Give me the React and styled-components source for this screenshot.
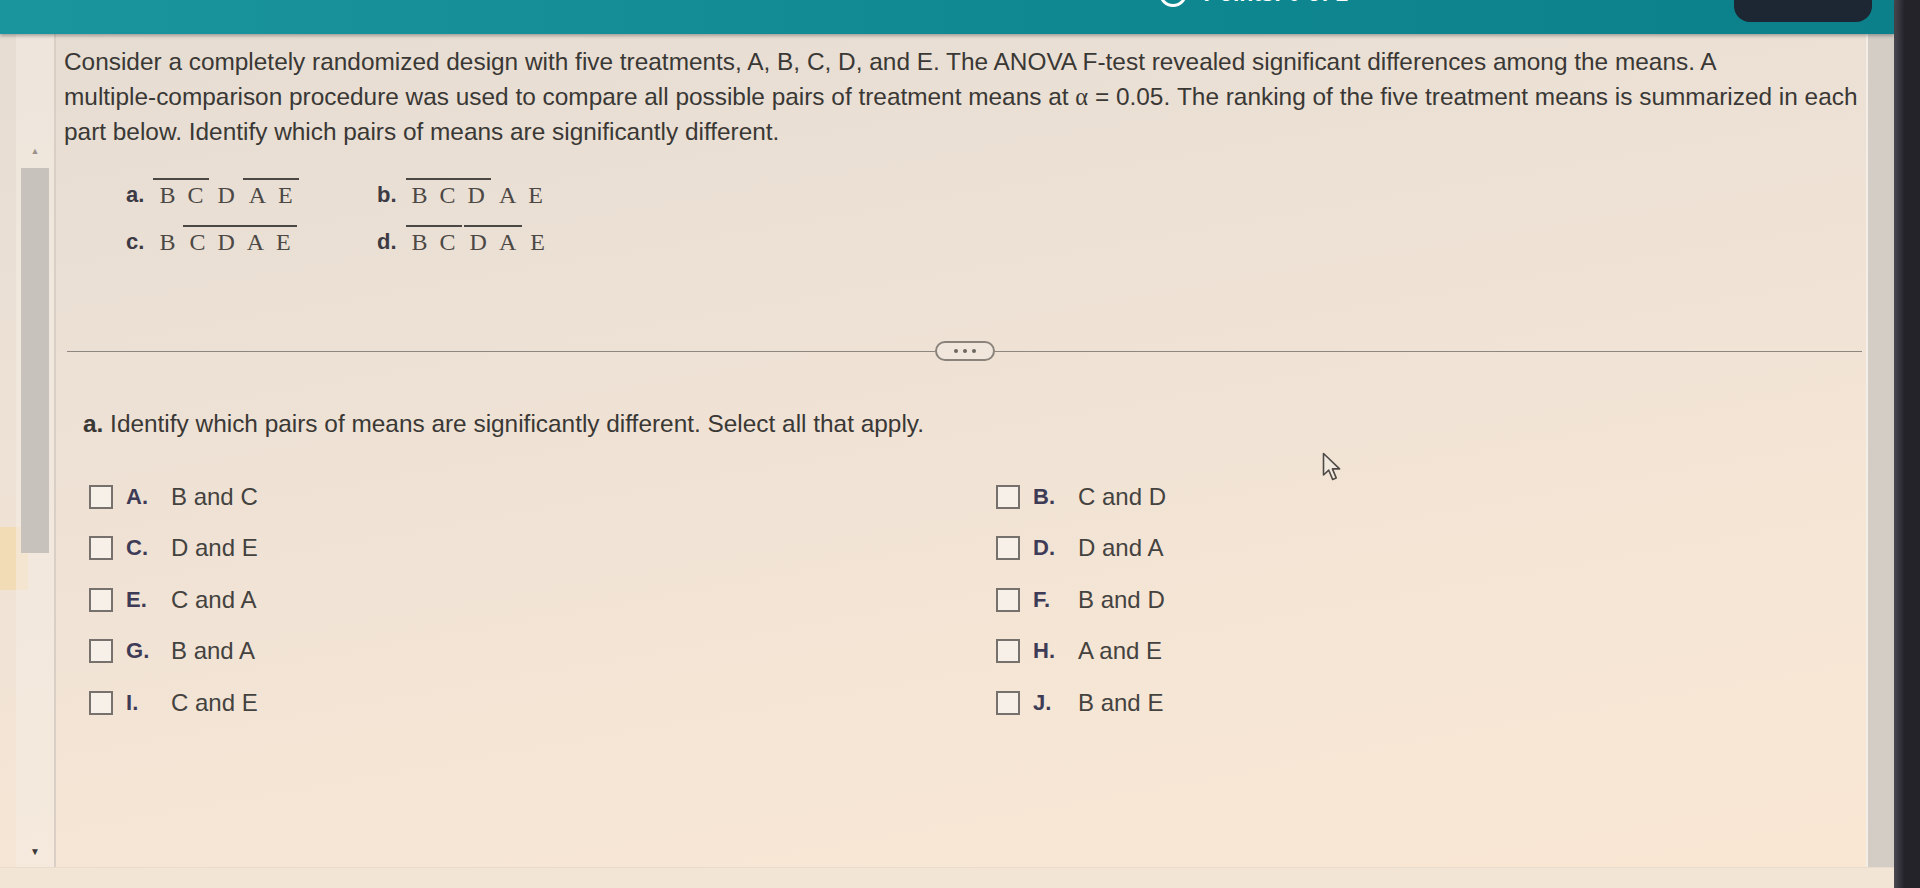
import React from 'react';
import styled, { createGlobalStyle } from 'styled-components';

const GlobalStyle = createGlobalStyle`
  html, body {
    margin: 0;
    padding: 0;
    width: 1920px;
    height: 888px;
    overflow: hidden;
  }
  body {
    font-family: "Liberation Sans", Arial, sans-serif;
    color: #3a3835;
  }
`;

const rankings = [
  { key: 'a', groups: [{ l: 'BC', over: true }, { l: 'D' }, { l: 'AE', over: true }] },
  { key: 'b', groups: [{ l: 'BCD', over: true }, { l: 'AE' }] },
  { key: 'c', groups: [{ l: 'B' }, { l: 'CDAE', over: true }] },
  { key: 'd', groups: [{ l: 'BC', over: true }, { l: 'DA', over: true }, { l: 'E' }] },
];

const options = [
  ['A', 'B and C'], ['B', 'C and D'],
  ['C', 'D and E'], ['D', 'D and A'],
  ['E', 'C and A'], ['F', 'B and D'],
  ['G', 'B and A'], ['H', 'A and E'],
  ['I', 'C and E'], ['J', 'B and E'],
];

export default function App() {
  return (
    <>
      <GlobalStyle />
      <Screen>
        <Display>
          <TopBar>
            <Points>
              <PointsIcon />
              <span>Points: 0 of 1</span>
            </Points>
            <SaveButton />
          </TopBar>
          <Body>
            <Rail>
              <Strip>
                <Patch />
              </Strip>
              <Track>
                <ArrowUp>▲</ArrowUp>
                <Thumb />
                <ArrowDown>▼</ArrowDown>
              </Track>
            </Rail>
            <Content>
              <Question>
                Consider a completely randomized design with five treatments, A, B, C, D, and E. The ANOVA F-test revealed significant differences among the means. A<br />
                multiple-comparison procedure was used to compare all possible pairs of treatment means at <Alpha>α</Alpha> = 0.05. The ranking of the five treatment means is summarized in each<br />
                part below. Identify which pairs of means are significantly different.
              </Question>

              <RankGrid>
                {rankings.map((r) => (
                  <RankCell key={r.key}>
                    <RankLabel>{r.key}.</RankLabel>
                    {r.groups.map((g, i) => (
                      <Segment key={i} $over={g.over}>
                        {g.l.split('').map((ch) => (
                          <Letter key={ch}>{ch}</Letter>
                        ))}
                      </Segment>
                    ))}
                  </RankCell>
                ))}
              </RankGrid>

              <Divider>
                <Line />
                <MoreButton>
                  <Dot /><Dot /><Dot />
                </MoreButton>
                <Line />
              </Divider>

              <Prompt>
                <b>a.</b> Identify which pairs of means are significantly different. Select all that apply.
              </Prompt>

              <OptionGrid>
                {options.map(([key, text]) => (
                  <Option key={key}>
                    <Box />
                    <OptionKey>{key}.</OptionKey>
                    <OptionText>{text}</OptionText>
                  </Option>
                ))}
              </OptionGrid>
            </Content>
            <Gutter />
          </Body>
          <FooterBand />
          <Cursor viewBox="0 0 20 30" width="20" height="30">
            <path d="M1.5 1.5 L1.5 23 L6.8 18.2 L10.6 27.4 L14.2 25.9 L10.4 16.9 L17.6 16.9 Z"
              fill="#f1e8de" stroke="#4d4a47" strokeWidth="1.6" strokeLinejoin="round" />
          </Cursor>
        </Display>
        <Bezel />
      </Screen>
    </>
  );
}

const Screen = styled.div`
  display: flex;
  width: 1920px;
  height: 888px;
  background: #2b2a31;
`;

const Display = styled.div`
  position: relative;
  flex: 1;
  min-width: 0;
  display: flex;
  flex-direction: column;
  background: linear-gradient(170deg, #e5dcd2 0%, #ede1d5 35%, #f6e6d5 75%, #f9e7d3 100%);
`;

const Bezel = styled.div`
  width: 26px;
  flex-shrink: 0;
  background: linear-gradient(to right, #4a4850, #24232a 40%);
`;

const TopBar = styled.header`
  height: 34px;
  flex-shrink: 0;
  display: flex;
  justify-content: flex-end;
  align-items: flex-start;
  gap: 386px;
  padding-right: 22px;
  overflow: hidden;
  background: linear-gradient(to right, #1b959d, #0f8892 55%, #0b808a);
  box-shadow: 0 2px 3px rgba(40, 50, 50, 0.35);
  z-index: 1;
`;

const Points = styled.div`
  display: flex;
  align-items: center;
  gap: 17px;
  transform: translateY(-21px);
  color: #ffffff;
  font-size: 23px;
  font-weight: bold;
`;

const PointsIcon = styled.span`
  width: 22px;
  height: 22px;
  border: 3px solid #ffffff;
  border-radius: 50%;
`;

const SaveButton = styled.div`
  width: 138px;
  height: 22px;
  border-radius: 0 0 16px 16px;
  background: #1d2733;
`;

const Body = styled.div`
  flex: 1;
  display: flex;
  min-height: 0;
  min-width: 0;
`;

const Rail = styled.div`
  width: 56px;
  display: flex;
  flex-shrink: 0;
`;

const Strip = styled.div`
  width: 16px;
  display: flex;
  flex-direction: column;
`;

const Patch = styled.div`
  margin-top: 493px;
  height: 63px;
  margin-right: -12px;
  background: #f1dcb5;
`;

const Track = styled.div`
  flex: 1;
  display: flex;
  flex-direction: column;
  align-items: center;
  border-right: 2px solid #d9cfc5;
  background: rgba(244, 236, 228, 0.55);
`;

const ArrowUp = styled.span`
  margin-top: 112px;
  font-size: 9px;
  line-height: 10px;
  color: #9a928a;
`;

const Thumb = styled.div`
  margin-top: 12px;
  width: 28px;
  height: 385px;
  background: #c8c2bc;
`;

const ArrowDown = styled.span`
  margin-top: auto;
  margin-bottom: 10px;
  font-size: 10px;
  line-height: 10px;
  color: #3b3a3a;
`;

const Content = styled.main`
  flex: 1;
  display: flex;
  flex-direction: column;
  padding: 10px 4px 0 8px;
  min-width: 0;
`;

const Gutter = styled.div`
  width: 26px;
  flex-shrink: 0;
  background: #d3cdc6;
  border-left: 2px solid #f3eee8;
`;

const FooterBand = styled.div`
  height: 20px;
  background: #f3e5d5;
  border-top: 1px solid #e9dccd;
`;

const Question = styled.p`
  margin: 0;
  font-size: 24.4px;
  line-height: 35px;
  white-space: nowrap;
  color: #3a3835;
`;

const Alpha = styled.span`
  font-family: "Liberation Serif", "Times New Roman", serif;
`;

const RankGrid = styled.div`
  display: grid;
  grid-template-columns: 251px 251px;
  grid-auto-rows: 47px;
  margin: 20px 0 0 62px;
`;

const RankCell = styled.div`
  display: flex;
  align-items: center;
`;

const RankLabel = styled.span`
  font-size: 22px;
  font-weight: bold;
  margin-right: 9px;
  padding-top: 4px;
  color: #3c3a44;
`;

const Segment = styled.span`
  display: inline-flex;
  margin-right: 2px;
  padding-top: 2px;
  border-top: 2px solid ${(p) => (p.$over ? '#4a4744' : 'transparent')};
`;

const Letter = styled.span`
  font-family: "Liberation Serif", "Times New Roman", serif;
  font-size: 24px;
  line-height: 26px;
  padding: 0 6px;
  color: #4b4845;
`;

const Divider = styled.div`
  display: flex;
  align-items: center;
  margin: 78px 0 0 3px;
  height: 20px;
`;

const Line = styled.div`
  flex: 1;
  height: 1px;
  background: #8d8780;
`;

const MoreButton = styled.div`
  width: 56px;
  height: 16px;
  border: 2px solid #8a837b;
  border-radius: 10px;
  display: flex;
  align-items: center;
  justify-content: center;
  gap: 5px;
  background: #f0e6db;
`;

const Dot = styled.span`
  width: 4px;
  height: 4px;
  border-radius: 50%;
  background: #6d6760;
`;

const Prompt = styled.p`
  margin: 48px 0 0 19px;
  font-size: 24.4px;
  line-height: 30px;
  color: #3a3835;

  b {
    font-weight: bold;
  }
`;

const OptionGrid = styled.div`
  display: grid;
  grid-template-columns: 907px 1fr;
  grid-auto-rows: 51.5px;
  margin: 32px 0 0 25px;
`;

const Option = styled.label`
  display: flex;
  align-items: center;
  font-size: 24px;
`;

const Box = styled.span`
  width: 20px;
  height: 20px;
  border: 2px solid #76716c;
  background: #f6f0e9;
  margin-right: 13px;
  flex-shrink: 0;
`;

const OptionKey = styled.span`
  width: 45px;
  font-size: 22px;
  font-weight: bold;
  color: #3e3b57;
`;

const OptionText = styled.span`
  color: #44423f;
`;

const Cursor = styled.svg`
  position: absolute;
  left: 1322px;
  top: 452px;
`;
